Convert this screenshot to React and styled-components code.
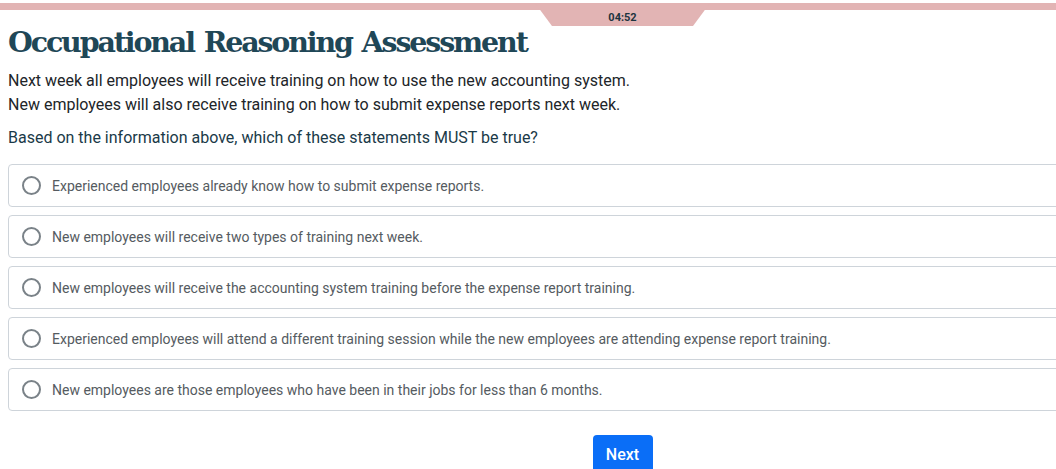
import React, { useState } from "react";
import styled, { createGlobalStyle } from "styled-components";

const Global = createGlobalStyle`
  html, body { margin: 0; padding: 0; overflow: hidden; background: #fff; }
  body { font-family: Roboto, "Liberation Sans", sans-serif; }
`;

const Page = styled.div`
  width: 1245px;
  position: relative;
`;

const TopBand = styled.div`
  height: 7px;
  margin-top: 3px;
  background: #e2b4b4;
  position: relative;
`;

const TimerTab = styled.div`
  position: absolute;
  left: 535px;
  top: 0;
  width: 175px;
  height: 23px;
  background: #e2b4b4;
  clip-path: polygon(0 0, 100% 0, 90.3% 100%, 9.7% 100%);
  display: flex;
  justify-content: center;
  box-sizing: border-box;
  font-family: Roboto, "Liberation Sans", sans-serif;
  font-weight: 700;
  font-size: 11px;
  line-height: 11px;
  color: #1d3440;
`;

const TimerText = styled.span`
  margin-top: 9px;
`;

const Content = styled.main`
  padding: 0 8px;
`;

const Title = styled.h1`
  margin: 14px 0 0 0;
  font-family: "DejaVu Serif", serif;
  font-weight: 700;
  font-size: 28.5px;
  line-height: 36px;
  letter-spacing: -2.15px;
  word-spacing: 2px;
  color: #1f4757;
`;

const Passage = styled.p`
  margin: 9px 0 0 0;
  font-size: 16px;
  line-height: 24px;
  color: #212529;
`;

const Question = styled.p`
  margin: 9px 0 0 0;
  font-size: 16px;
  line-height: 24px;
  color: #1a3a48;
`;

const Options = styled.div`
  margin-top: 14px;
  display: flex;
  flex-direction: column;
  gap: 8px;
`;

const Option = styled.label`
  display: flex;
  align-items: center;
  gap: 11px;
  height: 43px;
  box-sizing: border-box;
  padding: 0 13px;
  border: 1px solid #ced4da;
  border-radius: 4px;
  cursor: pointer;
  font-size: 14px;
  color: #555b61;
`;

const Radio = styled.span`
  width: 19px;
  height: 19px;
  box-sizing: border-box;
  border-radius: 50%;
  border: 2px solid ${(p) => (p.$checked ? "#0d6efd" : "#7a8288")};
  background: ${(p) => (p.$checked ? "radial-gradient(circle, #0d6efd 40%, #fff 45%)" : "#fff")};
  flex: none;
`;

const Footer = styled.div`
  display: flex;
  justify-content: center;
  margin-top: 24px;
`;

const NextButton = styled.button`
  width: 60px;
  height: 38px;
  border: none;
  border-radius: 4px;
  background: #0a6ef7;
  color: #fff;
  font-family: Roboto, "Liberation Sans", sans-serif;
  font-size: 16px;
  font-weight: 500;
  cursor: pointer;
`;

const options = [
  "Experienced employees already know how to submit expense reports.",
  "New employees will receive two types of training next week.",
  "New employees will receive the accounting system training before the expense report training.",
  "Experienced employees will attend a different training session while the new employees are attending expense report training.",
  "New employees are those employees who have been in their jobs for less than 6 months.",
];

export default function App() {
  const [sel, setSel] = useState(null);
  return (
    <Page>
      <Global />
      <TopBand>
        <TimerTab>
          <TimerText>04:52</TimerText>
        </TimerTab>
      </TopBand>
      <Content>
        <Title>Occupational Reasoning Assessment</Title>
        <Passage>
          Next week all employees will receive training on how to use the new accounting system.
          <br />
          New employees will also receive training on how to submit expense reports next week.
        </Passage>
        <Question>Based on the information above, which of these statements MUST be true?</Question>
        <Options>
          {options.map((o, i) => (
            <Option key={i} onClick={() => setSel(i)}>
              <Radio $checked={sel === i} />
              {o}
            </Option>
          ))}
        </Options>
        <Footer>
          <NextButton>Next</NextButton>
        </Footer>
      </Content>
    </Page>
  );
}
